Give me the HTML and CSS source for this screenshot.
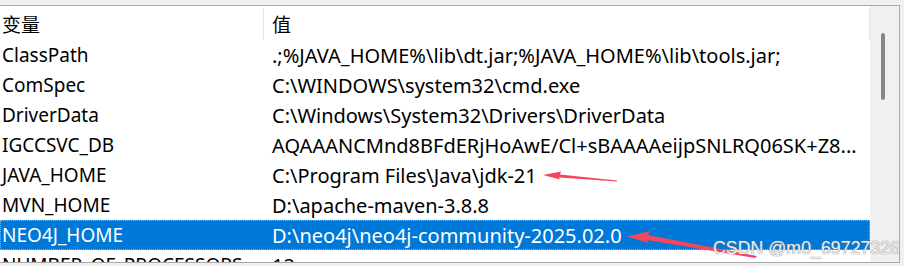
FILE: index.html
```html
<!DOCTYPE html>
<html lang="zh-CN">
<head>
<meta charset="utf-8">
<title>环境变量</title>
<link rel="stylesheet" href="styles.css">
</head>
<body>
<div class="frame">
  <div class="list">
    <div class="header">
      <div class="hcell name">变量</div>
      <div class="hcell value">值</div>
    </div>
    <div class="rows">
      <div class="row"><div class="name">ClassPath</div><div class="value">.;%JAVA_HOME%\lib\dt.jar;%JAVA_HOME%\lib\tools.jar;</div></div>
      <div class="row"><div class="name">ComSpec</div><div class="value">C:\WINDOWS\system32\cmd.exe</div></div>
      <div class="row"><div class="name">DriverData</div><div class="value">C:\Windows\System32\Drivers\DriverData</div></div>
      <div class="row"><div class="name">IGCCSVC_DB</div><div class="value">AQAAANCMnd8BFdERjHoAwE/Cl+sBAAAAeijpSNLRQ06SK+Z8...</div></div>
      <div class="row"><div class="name">JAVA_HOME</div><div class="value">C:\Program Files\Java\jdk-21</div></div>
      <div class="row"><div class="name">MVN_HOME</div><div class="value">D:\apache-maven-3.8.8</div></div>
      <div class="row selected"><div class="name">NEO4J_HOME</div><div class="value">D:\neo4j\neo4j-community-2025.02.0</div></div>
      <div class="row"><div class="name">NUMBER_OF_PROCESSORS</div><div class="value">12</div></div>
    </div>
  </div>
  <div class="scrollbar"><div class="thumb"></div></div>
  <svg class="arrows" width="904" height="266" viewBox="0 0 904 266">
    <polygon points="543,175 561,171.5 560,174.5 617,180.5 617,181.5 559,177.5 560,179.5" fill="#f5475b"/>
    <polygon points="627,236.5 650,231 648,235 757,256 755,258 647,240 649,243" fill="#f5475b"/>
  </svg>
  <div class="watermark">CSDN @m0_69727326</div>
</div>
</body>
</html>
```
FILE: styles.css
```css
html, body {
  margin: 0;
  padding: 0;
  background: #f0f0f0;
  width: 904px;
  height: 266px;
  overflow: hidden;
}

.frame {
  position: relative;
  margin-top: 5px;
  width: 899px;
  height: 256px;
  border-top: 1px solid #a9a9a9;
  border-right: 1px solid #a9a9a9;
  border-bottom: 1px solid #a9a9a9;
  display: flex;
  font-family: "Noto Sans", "Noto Sans CJK SC", sans-serif;
  font-size: 20px;
  color: #000;
  overflow: hidden;
}

.list {
  width: 870px;
  background: #fff;
  display: flex;
  flex-direction: column;
  overflow: hidden;
}

.header {
  display: flex;
  height: 34px;
  flex: none;
  padding-top: 2px;
  box-sizing: border-box;
}

.hcell {
  display: flex;
  align-items: center;
  font-size: 19px;
}

.header .name {
  border-right: 1px solid #e5e5e5;
  height: 32px;
}

.header .value {
  flex: 1;
  border-right: 1px solid #e5e5e5;
  height: 32px;
}

.name {
  width: 261px;
  padding-left: 2px;
  white-space: nowrap;
  overflow: hidden;
}

.value {
  padding-left: 8px;
  white-space: nowrap;
}

.rows {
  display: flex;
  flex-direction: column;
}

.row {
  display: flex;
  align-items: center;
  height: 30px;
  flex: none;
}

.row .name {
  width: 262px;
  font-size: 19px;
}

.row.selected {
  background: #0078d7;
  color: #fff;
  outline: 1px dotted #e3a25a;
  outline-offset: -1px;
}

.scrollbar {
  width: 29px;
  background: #f0f0f0;
  position: relative;
}

.thumb {
  position: absolute;
  left: 11px;
  top: 27px;
  width: 4px;
  height: 67px;
  border-radius: 2px;
  background: #878787;
}

.arrows {
  position: absolute;
  left: 0;
  top: -6px;
  pointer-events: none;
}

.watermark {
  position: absolute;
  left: 713px;
  top: 232px;
  font-family: "Liberation Sans", Arial, sans-serif;
  font-size: 17.8px;
  color: rgba(255, 255, 255, 0.85);
  text-shadow: 0 0 1px #8a8a8a, 0 0 1px #8a8a8a;
  white-space: nowrap;
}
```
